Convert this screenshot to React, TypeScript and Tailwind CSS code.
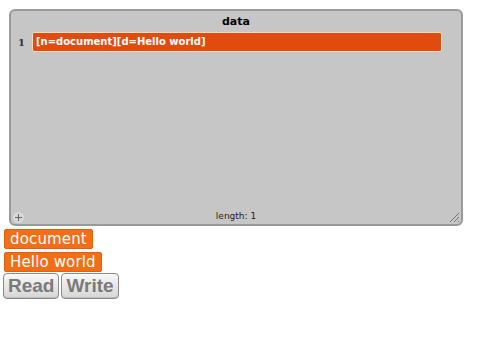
const items = ["[n=document][d=Hello world]"];

const Label = ({ text }: { text: string }) => (
  <div className="self-start h-[20px] px-[5px] bg-[#f26e17] border border-[#e0600c] rounded-[2px] text-white text-[15px] leading-[18px] tracking-[0.15px]">
    {text}
  </div>
);

const Button = ({ text }: { text: string }) => (
  <button className="h-[26px] px-[4px] border border-[#8a8a8a] rounded-[4px] bg-gradient-to-b from-[#f8f8f8] to-[#d6d6d6] text-[#7a7a7a] font-bold text-[19px] leading-[22px] font-['Liberation_Sans',sans-serif] shadow-[inset_0_-1px_0_#bbb]">
    {text}
  </button>
);

export default function App() {
  return (
    <div className="w-[480px] h-[360px] bg-white font-['DejaVu_Sans',sans-serif]">
      <div className="pt-[9px] pl-[9px]">
        <div className="relative w-[454px] h-[217px] bg-[#c6c6c6] border-2 border-[#9a9a9a] rounded-[6px] flex flex-col">
          <div className="h-[20px] pt-[1px] text-center text-[11px] font-bold leading-[19px] text-black">
            data
          </div>
          <div className="flex-1 pt-[1px]">
            {items.map((item, i) => (
              <div key={i} className="flex items-center h-[20px]">
                <div className="w-[21px] text-center text-[10px] font-bold text-[#333] font-['DejaVu_Serif',serif]">
                  {i + 1}
                </div>
                <div className="flex-1 mr-[19px] h-[20px] bg-[#e04c10] border border-[#f6dcc0] rounded-[2px] text-white text-[10px] font-bold leading-[18px] pl-[3px]">
                  {item}
                </div>
              </div>
            ))}
          </div>
          <div className="relative h-[14px] flex items-center">
            <div className="ml-[2px] w-[11px] h-[11px] rounded-full bg-[#d8d8d8] flex items-center justify-center">
              <svg width="9" height="9" viewBox="0 0 9 9">
                <path d="M4.5 1v7M1 4.5h7" stroke="#666" strokeWidth="1" />
              </svg>
            </div>
            <div className="flex-1 text-center text-[9px] text-[#222] pr-[13px]">
              length: 1
            </div>
          </div>
          <svg className="absolute right-[1px] bottom-[1px]" width="12" height="12" viewBox="0 0 12 12">
            <path d="M11 2L2 11M11 6L6 11M11 10L10 11" stroke="#777" strokeWidth="1" />
          </svg>
        </div>
      </div>
      <div className="flex flex-col gap-[3px] pl-[4px] pt-[3px]">
        <Label text="document" />
        <Label text="Hello world" />
        <div className="flex gap-[2px] -ml-[1px] -mt-[2px]">
          <Button text="Read" />
          <Button text="Write" />
        </div>
      </div>
    </div>
  );
}
